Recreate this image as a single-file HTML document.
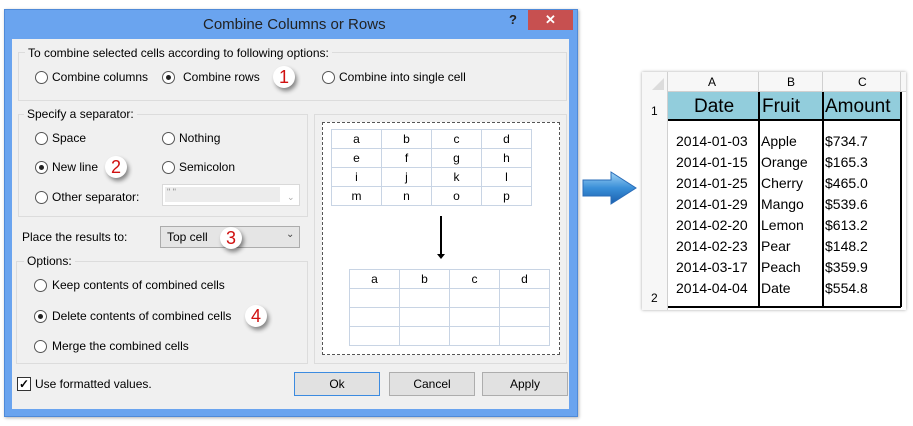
<!DOCTYPE html>
<html><head><meta charset="utf-8"><style>
*{margin:0;padding:0;box-sizing:border-box}
body{width:913px;height:426px;background:#fff;position:relative;overflow:hidden;font-family:"Liberation Sans",sans-serif;font-size:12px;color:#000}
.a{position:absolute}
.grp{position:absolute;border:1px solid #dcdcdc}
.lg{position:absolute;background:#f0f0f0;padding:0 3px;font-size:12px;line-height:14px}
.r{position:absolute;width:13px;height:13px;border:1px solid #555;border-radius:50%;background:#fff}
.r.on::after{content:"";position:absolute;left:3px;top:3px;width:5px;height:5px;border-radius:50%;background:#222}
.t{position:absolute;font-size:12px;line-height:14px;white-space:nowrap}
.badge{position:absolute;width:22px;height:22px;border-radius:50%;background:#fff;box-shadow:2px 3px 4px rgba(0,0,0,.45);color:#d01010;font-size:18px;line-height:22px;text-align:center;font-family:"Liberation Sans",sans-serif}
.btn{position:absolute;top:372px;height:24px;width:86px;background:#e1e1e1;border:1px solid #adadad;text-align:center;line-height:22px;font-size:12px}
table{border-collapse:collapse;position:absolute}
td{border:1px solid #c8d4e4;text-align:center;font-size:12px;padding:0;height:19px;width:50px}
</style></head><body>
<div class="a" style="left:4px;top:9px;width:574px;height:408px;background:#6aa4ef;border:1px solid #4f8ad8;box-shadow:1px 1px 3px rgba(0,0,0,.3)"></div>
<div class="a" style="left:12px;top:39px;width:557px;height:370px;background:#f0f0f0"></div>
<div class="t" style="left:203px;top:16px;font-size:15px;line-height:18px;color:#222">Combine Columns or Rows</div>
<div class="t" style="left:509px;top:13px;font-size:13px;font-weight:bold;color:#222">?</div>
<div class="a" style="left:528px;top:10px;width:45px;height:20px;background:#c75050;color:#fff;text-align:center;font-size:13px;line-height:20px;font-weight:bold">✕</div>

<div class="grp" style="left:18px;top:52px;width:549px;height:49px"></div>
<div class="lg" style="left:25px;top:46px">To combine selected cells according to following options:</div>
<div class="r" style="left:35px;top:71px"></div><div class="t" style="left:52px;top:70px">Combine columns</div>
<div class="r on" style="left:162px;top:71px"></div><div class="t" style="left:183px;top:70px">Combine rows</div>
<div class="r" style="left:322px;top:71px"></div><div class="t" style="left:339px;top:70px">Combine into single cell</div>

<div class="grp" style="left:18px;top:114px;width:290px;height:103px"></div>
<div class="lg" style="left:24px;top:107px">Specify a separator:</div>
<div class="r" style="left:35px;top:132px"></div><div class="t" style="left:52px;top:131px">Space</div>
<div class="r" style="left:162px;top:132px"></div><div class="t" style="left:179px;top:131px">Nothing</div>
<div class="r on" style="left:35px;top:161px"></div><div class="t" style="left:52px;top:160px">New line</div>
<div class="r" style="left:162px;top:161px"></div><div class="t" style="left:179px;top:160px">Semicolon</div>
<div class="r" style="left:35px;top:191px"></div><div class="t" style="left:52px;top:190px">Other separator:</div>
<div class="a" style="left:162px;top:184px;width:138px;height:22px;background:#fff;border:1px solid #d9d9d9"></div>
<div class="a" style="left:165px;top:187px;width:115px;height:15px;background:#ececec;font-size:9px;color:#888;padding-left:2px">" "</div>
<div class="t" style="left:287px;top:190px;color:#aaa;font-size:9px">⌄</div>

<div class="t" style="left:22px;top:230px">Place the results to:</div>
<div class="a" style="left:160px;top:226px;width:140px;height:22px;background:#e5e5e5;border:1px solid #acacac"></div>
<div class="t" style="left:167px;top:230px">Top cell</div>
<div class="t" style="left:286px;top:228px;font-size:10px;color:#444">⌄</div>

<div class="grp" style="left:16px;top:261px;width:292px;height:103px"></div>
<div class="lg" style="left:24px;top:254px">Options:</div>
<div class="r" style="left:34px;top:279px"></div><div class="t" style="left:52px;top:278px">Keep contents of combined cells</div>
<div class="r on" style="left:34px;top:310px"></div><div class="t" style="left:52px;top:309px">Delete contents of combined cells</div>
<div class="r" style="left:34px;top:340px"></div><div class="t" style="left:52px;top:339px">Merge the combined cells</div>

<div class="grp" style="left:314px;top:114px;width:253px;height:250px"></div>
<div class="a" style="left:322px;top:122px;width:238px;height:233px;background:#fff;border:1px dashed #555"></div>
<table style="left:331px;top:129px"><tr><td>a</td><td>b</td><td>c</td><td>d</td></tr><tr><td>e</td><td>f</td><td>g</td><td>h</td></tr><tr><td>i</td><td>j</td><td>k</td><td>l</td></tr><tr><td>m</td><td>n</td><td>o</td><td>p</td></tr></table>
<div class="a" style="left:440px;top:216px;width:2px;height:40px;background:#000"></div>
<div class="a" style="left:437px;top:254px;width:0;height:0;border-left:4px solid transparent;border-right:4px solid transparent;border-top:5px solid #000"></div>
<table style="left:349px;top:269px"><tr><td>a</td><td>b</td><td>c</td><td>d</td></tr><tr><td></td><td></td><td></td><td></td></tr><tr><td></td><td></td><td></td><td></td></tr><tr><td></td><td></td><td></td><td></td></tr></table>

<div class="a" style="left:17px;top:377px;width:14px;height:14px;border:1px solid #333;background:#fff;font-size:12px;line-height:12px;text-align:center;font-weight:bold">✓</div>
<div class="t" style="left:35px;top:377px">Use formatted values.</div>
<div class="btn" style="left:294px;border-color:#3c8be0">Ok</div>
<div class="btn" style="left:389px">Cancel</div>
<div class="btn" style="left:482px">Apply</div>

<div class="badge" style="left:273px;top:66px">1</div>
<div class="badge" style="left:105px;top:156px">2</div>
<div class="badge" style="left:220px;top:227px">3</div>
<div class="badge" style="left:245px;top:305px">4</div>

<svg class="a" style="left:582px;top:170px" width="56" height="36"><defs><linearGradient id="g" x1="0" y1="0" x2="0" y2="1"><stop offset="0" stop-color="#9fd3f5"/><stop offset=".5" stop-color="#3a8fd8"/><stop offset="1" stop-color="#1a5fae"/></linearGradient></defs><path d="M1 10 H29 V2 L54 18 L29 34 V26 H1 Z" fill="url(#g)" stroke="#2a6cb8" stroke-width="1"/></svg>

<div class="a" style="left:642px;top:72px;width:264px;height:238px;background:#fff;box-shadow:0 0 3px rgba(0,0,0,.35)"></div>
<div class="a" style="left:642px;top:72px;width:264px;height:20px;background:#f7f7f7;border-bottom:1px solid #d0d0d0"></div>
<div class="a" style="left:642px;top:72px;width:26px;height:238px;background:#f7f7f7;border-right:1px solid #d0d0d0"></div>
<div class="a" style="left:652px;top:78px;width:0;height:0;border-left:12px solid transparent;border-bottom:12px solid #dcdcdc"></div>
<div class="t" style="left:708px;top:75px;font-size:12px">A</div>
<div class="t" style="left:787px;top:75px;font-size:12px">B</div>
<div class="t" style="left:858px;top:75px;font-size:12px">C</div>
<div class="a" style="left:758px;top:72px;width:1px;height:20px;background:#d0d0d0"></div>
<div class="a" style="left:822px;top:72px;width:1px;height:20px;background:#d0d0d0"></div>
<div class="a" style="left:900px;top:72px;width:1px;height:20px;background:#d0d0d0"></div>
<div class="t" style="left:651px;top:104px;font-size:12px">1</div>
<div class="t" style="left:651px;top:291px;font-size:12px">2</div>
<div class="a" style="left:668px;top:92px;width:233px;height:28px;background:#92cddc"></div>
<div class="a" style="left:668px;top:119px;width:233px;height:2px;background:#000"></div>
<div class="a" style="left:668px;top:306px;width:233px;height:2px;background:#000"></div>
<div class="a" style="left:758px;top:92px;width:2px;height:215px;background:#000"></div>
<div class="a" style="left:822px;top:92px;width:2px;height:215px;background:#000"></div>
<div class="a" style="left:900px;top:92px;width:2px;height:215px;background:#000"></div>
<div class="t" style="left:694px;top:96px;font-size:19px;line-height:22px">Date</div>
<div class="t" style="left:762px;top:96px;font-size:19px;line-height:22px">Fruit</div>
<div class="t" style="left:825px;top:96px;font-size:19px;line-height:22px">Amount</div>
<div class="t" style="left:676px;top:131px;font-size:14px;line-height:21px">2014-01-03<br>2014-01-15<br>2014-01-25<br>2014-01-29<br>2014-02-20<br>2014-02-23<br>2014-03-17<br>2014-04-04</div>
<div class="t" style="left:761px;top:131px;font-size:14px;line-height:21px">Apple<br>Orange<br>Cherry<br>Mango<br>Lemon<br>Pear<br>Peach<br>Date</div>
<div class="t" style="left:825px;top:131px;font-size:14px;line-height:21px">$734.7<br>$165.3<br>$465.0<br>$539.6<br>$613.2<br>$148.2<br>$359.9<br>$554.8</div>
</body></html>
